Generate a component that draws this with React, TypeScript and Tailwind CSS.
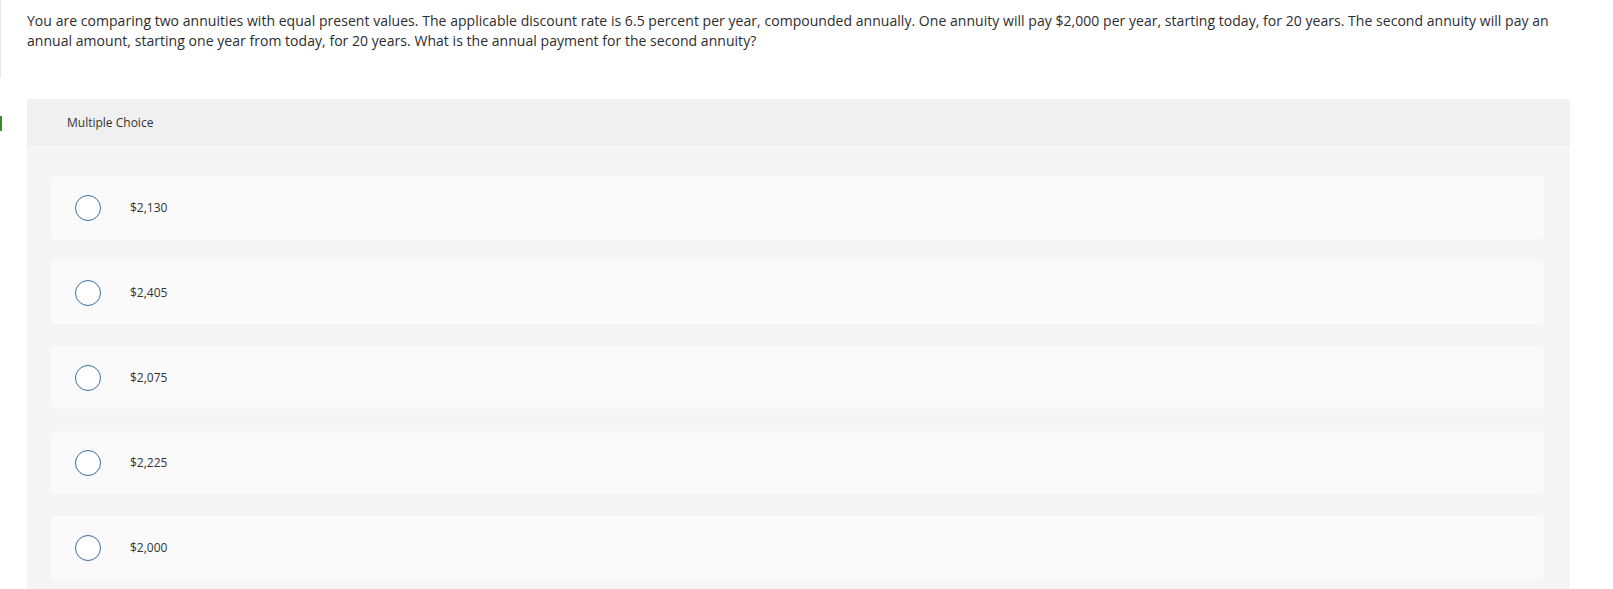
import React from "react";

const options = ["$2,130", "$2,405", "$2,075", "$2,225", "$2,000"];

export default function App() {
  return (
    <div className="relative w-[1613px] h-[589px] bg-white overflow-hidden font-['Open_Sans',sans-serif] text-[#333]">
      <div className="absolute left-0 top-0 w-px h-[78px] bg-[#e8e8e8]" />
      <div className="absolute left-0 top-[116px] w-[2px] h-[15px] bg-[#3d8a2e]" />
      <div className="pl-[27px] pr-[30px] pt-[11px]">
        <p className="text-[14px] leading-[20px] tracking-[0.04px] text-[#2d2d2d] whitespace-nowrap">
          You are comparing two annuities with equal present values. The applicable discount rate is 6.5 percent per year, compounded annually. One annuity will pay $2,000 per year, starting today, for 20 years. The second annuity will pay an<br />
          annual amount, starting one year from today, for 20 years. What is the annual payment for the second annuity?
        </p>
        <div className="mt-[48px] w-[1543px] rounded-t-[3px] bg-[#f5f5f5]">
          <div className="h-[47px] flex items-center pl-[40px] bg-[#f0f0f0] rounded-t-[3px] text-[12px] text-[#333]">
            Multiple Choice
          </div>
          <div className="flex flex-col gap-[22px] pt-[30px] pl-[24px] pr-[26px] pb-[20px]">
            {options.map((o) => (
              <div key={o} className="h-[63px] rounded-[4px] bg-[#fafafa] flex items-center">
                <div className="ml-[24px] w-[26px] h-[26px] rounded-full border-[1.5px] border-[#3b6d9c] bg-white" />
                <span className="ml-[29px] text-[12px] text-[#333]">{o}</span>
              </div>
            ))}
          </div>
        </div>
      </div>
    </div>
  );
}
